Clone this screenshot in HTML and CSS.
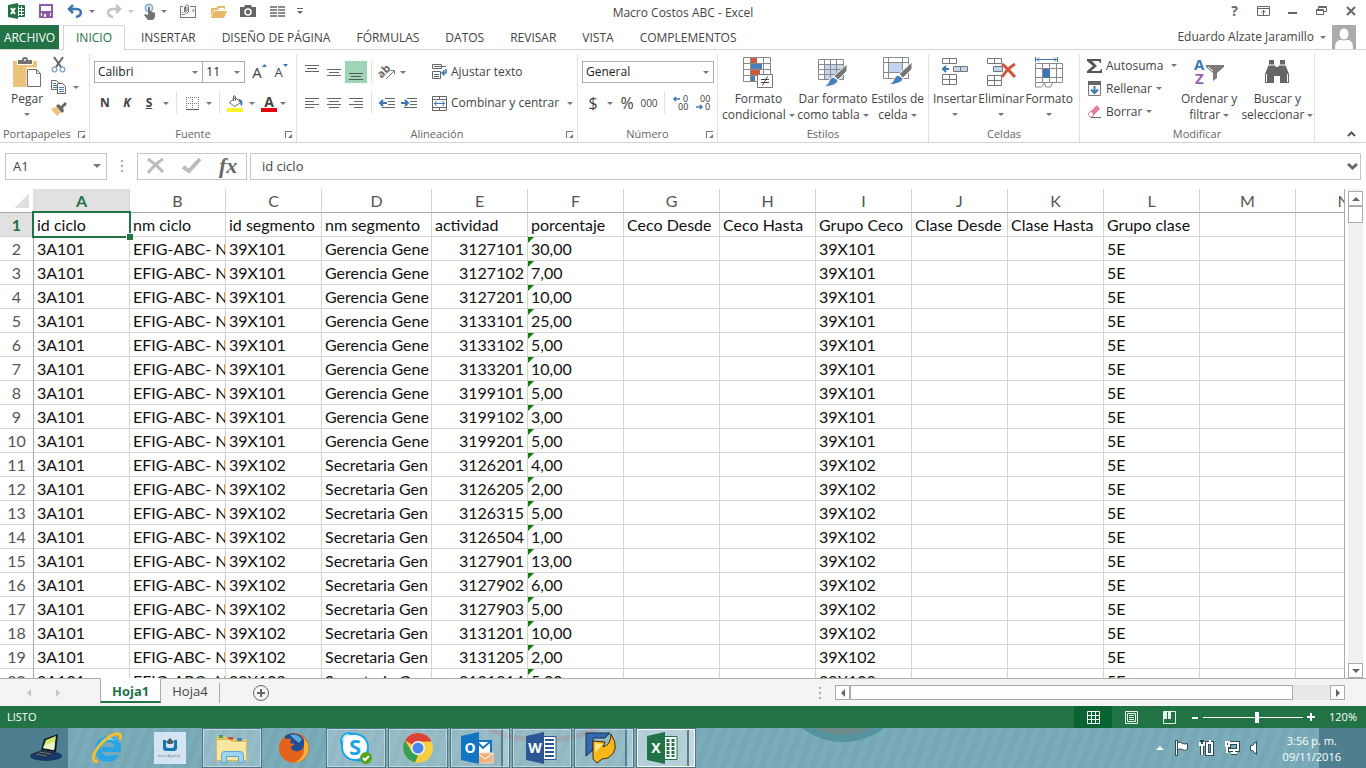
FILE: index.html
```html
<!DOCTYPE html>
<html lang="es">
<head>
  <meta charset="UTF-8" />
  <title>Macro Costos ABC - Excel</title>
  <meta name="viewport" content="width=device-width, initial-scale=1" />
  <link rel="stylesheet" href="styles.css">
</head>
<body>

  <!-- TITLE BAR -->
  <header class="titlebar">
    <div class="qat">
      <button class="qbtn" aria-label="Excel"><svg width="18" height="16" viewBox="0 0 18 16"><path fill="#fff" stroke="#217346" d="M9 2.500h7.500v11H9z"/><path stroke="#217346" stroke-width="2" stroke-dasharray="2 1" d="M12 3v10M15 3v10"/><path fill="#217346" d="M0 2l10-2v16L0 14z"/><path stroke="#fff" stroke-width="2" d="M3 5l4 6M7 5l-4 6"/></svg></button>
      <button class="qbtn" aria-label="Guardar"><svg width="14" height="14" viewBox="0 0 14 14"><path fill="none" stroke="#8e5ba6" stroke-width="2" d="M1 1h12v12H1z"/><path fill="#8e5ba6" d="M1 7h12v2H1zM3 9h8v5H3z"/><path fill="#fff" d="M5 10h2v3H5z"/></svg></button>
      <div class="pair">
        <button class="qbtn" aria-label="Deshacer"><svg width="16" height="14" viewBox="0 0 16 14"><path fill="none" stroke="#3d76b5" stroke-width="2.500" d="M6 1L2 5l4 4M2 5h7c7 0 6 7 0 8"/></svg></button>
        <button class="drop" aria-label="Más"></button>
      </div>
      <div class="pair">
        <button class="qbtn" aria-label="Rehacer"><svg width="16" height="14" viewBox="0 0 16 14"><path fill="none" stroke="#c3c3c3" stroke-width="2.500" d="M10 1l4 4-4 4M14 5H7C0 5 1 12 7 13"/></svg></button>
        <button class="drop pale" aria-label="Más"></button>
      </div>
      <div class="pair">
        <button class="qbtn slim" aria-label="Modo táctil"><svg width="14" height="17" viewBox="0 0 14 17"><circle cx="6" cy="5" r="3.500" fill="none" stroke="#8fb4d6" stroke-width="2"/><path fill="#737373" d="M5 4q1-1 2 0v4l5 2v4l-2 3H5l-4-5 1-1 3 1z"/></svg></button>
        <button class="drop" aria-label="Más"></button>
      </div>
      <button class="qbtn wide" aria-label="Correo"><svg width="16" height="14" viewBox="0 0 16 14"><path fill="none" stroke="#777" d="M3 2.500H.500v11h15v-11H10M12.500 5.500h1v2h-1M2 10.500h3M2 8.500h1"/><path fill="none" stroke="#777" d="M4.500 3v5q2 3 4 0V2q-1.500-3-3 0v5q1 1 1.500 0V3"/></svg></button>
      <button class="qbtn" aria-label="Abrir"><svg width="16" height="13" viewBox="0 0 16 13"><path fill="#e9b869" d="M0 3h5l2-2h7v3h-1V3H8L7 5H3L0 11zM3 6h13l-3 7H0z"/></svg></button>
      <button class="qbtn" aria-label="Cámara"><svg width="16" height="12" viewBox="0 0 16 12"><path fill="#666" d="M0 2h4l1-2h6l1 2h4v10H0z"/><circle cx="8" cy="7" r="3" fill="#666" stroke="#fff" stroke-width="1.500"/></svg></button>
      <button class="qbtn" aria-label="Paneles"><svg width="15" height="11" viewBox="0 0 15 11"><path fill="#8b8b8b" d="M0 0h7v2H0zM8 0h7v2H8zM0 3h7v2H0zM8 3h7v2H8zM0 6h7v2H0zM8 6h7v2H8zM0 9h7v2H0zM8 9h7v2H8z"/></svg></button>
      <button class="more" aria-label="Personalizar"></button>
    </div>
    <div class="doc-title">Macro Costos ABC - Excel</div>
    <div class="win-buttons">
      <button class="help" aria-label="Ayuda">?</button>
      <button aria-label="Opciones de cinta"><svg width="13" height="10" viewBox="0 0 13 10"><path fill="none" stroke="#666" d="M.500.500h12v9H.500zM1 2.500h11M6.500 9V4.500M4.500 6.500l2-2 2 2"/></svg></button>
      <button aria-label="Minimizar"><svg width="9" height="10" viewBox="0 0 9 10"><path fill="#666" d="M0 6h9v2H0z"/></svg></button>
      <button aria-label="Restaurar"><svg width="11" height="10" viewBox="0 0 11 10"><path fill="none" stroke="#666" d="M.500 3.500h7v5h-7zM.500 4.500h7M2.500 3V.500h8v5H8M3 1.500h7"/></svg></button>
      <button aria-label="Cerrar"><svg width="10" height="10" viewBox="0 0 10 10"><path stroke="#666" stroke-width="2" d="M1 1l8 8M9 1L1 9"/></svg></button>
    </div>
  </header>

  <!-- RIBBON TABS -->
  <nav class="tabs">
    <a href="#" class="tab file">ARCHIVO</a>
    <a href="#" class="tab active">INICIO</a>
    <a href="#" class="tab">INSERTAR</a>
    <a href="#" class="tab">DISEÑO DE PÁGINA</a>
    <a href="#" class="tab">FÓRMULAS</a>
    <a href="#" class="tab">DATOS</a>
    <a href="#" class="tab">REVISAR</a>
    <a href="#" class="tab">VISTA</a>
    <a href="#" class="tab">COMPLEMENTOS</a>
    <button class="account">Eduardo Alzate Jaramillo <span class="caret"></span>
      <svg width="24" height="24" viewBox="0 0 24 24"><path fill="#ababab" d="M0 0h24v24H0z"/><path fill="#fff" d="M3 24c0-7 2-9 6-9h6c4 0 6 2 6 9z"/><ellipse cx="12" cy="9" rx="5" ry="6" fill="#fff" stroke="#ababab"/></svg>
    </button>
  </nav>

  <!-- RIBBON -->
  <section class="ribbon">
    <div class="group clipboard">
      <div class="group-body">
        <button class="big">
          <svg width="30" height="31" viewBox="0 0 30 31"><path fill="#edc27a" d="M1 4h24v26H1z"/><path fill="#fff" d="M5 2h16v6H5z"/><path fill="#737373" d="M6 3h4q0-3 3-3t3 3h4v4H6z"/><circle cx="13" cy="3" r="1" fill="#fff"/><path fill="#fff" stroke="#fff" stroke-width="3" d="M16 12h9l4 4v14H16z"/><path fill="#fff" stroke="#737373" d="M15.500 12.500h9l4 4v13h-13zM24.500 12.500v4h4"/></svg>
          <span>Pegar</span><span class="caret"></span>
        </button>
        <div class="clip-tools">
          <button aria-label="Cortar"><svg width="15" height="16" viewBox="0 0 15 16"><path stroke="#666" stroke-width="2" d="M3 0l7 10M12 0L5 10"/><circle cx="3.500" cy="12.500" r="2.500" fill="none" stroke="#4a7ebb"/><circle cx="11.500" cy="12.500" r="2.500" fill="none" stroke="#4a7ebb"/></svg></button>
          <button aria-label="Copiar"><svg width="15" height="14" viewBox="0 0 15 14"><path fill="#fff" stroke="#666" d="M.500.500h5l2 2v7h-7z"/><path stroke="#4a7ebb" d="M2 3.500h3M2 5.500h4M2 7.500h4"/><path fill="#fff" stroke="#666" d="M6.500 3.500h5l3 3v7h-8z"/><path stroke="#4a7ebb" d="M8 7.500h5M8 9.500h5M8 11.500h5"/></svg><span class="caret"></span></button>
          <button aria-label="Copiar formato"><svg width="16" height="14" viewBox="0 0 16 14"><path fill="#edc27a" d="M0 7l5-2 5 5-4 4z"/><path fill="#666" d="M5 4l2-2 3 2 4-4 2 2-4 4 1 3-2 2z"/></svg></button>
        </div>
      </div>
      <div class="group-label">Portapapeles<i class="launcher"></i></div>
    </div>

    <div class="group font">
      <div class="group-body rows">
        <div class="row">
          <select class="font-name" aria-label="Fuente"><option>Calibri</option></select><select class="font-size" aria-label="Tamaño"><option>11</option></select>
          <button class="grow" aria-label="Aumentar">A<svg width="5" height="3" viewBox="0 0 5 3"><path fill="#3d76b5" d="M0 3L2.500 0 5 3z"/></svg></button>
          <button class="grow less" aria-label="Disminuir">A<svg width="5" height="3" viewBox="0 0 5 3"><path fill="#3d76b5" d="M0 0h5L2.500 3z"/></svg></button>
        </div>
        <div class="row">
          <button class="tool letter">N</button>
          <button class="tool letter italic">K</button>
          <button class="tool letter under">S</button>
          <button class="drop" aria-label="Subrayado"></button>
          <i class="sep"></i>
          <button class="tool" aria-label="Bordes"><svg width="13" height="13" viewBox="0 0 13 13"><path fill="none" stroke="#777" stroke-dasharray="1 1" d="M0 .500h13M0 6.500h13M.500 0v13M6.500 0v13M12.500 0v13"/><path stroke="#555" d="M0 12.500h13"/></svg></button>
          <button class="drop" aria-label="Más bordes"></button>
          <i class="sep"></i>
          <button class="tool" aria-label="Relleno"><svg width="17" height="17" viewBox="0 0 17 17"><path fill="#fff" stroke="#666" d="M2.500 7.500l6-5 5 5-6 4z"/><path fill="none" stroke="#666" d="M6.500 6V1q1.500-1 2 1v4"/><path fill="#3d76b5" d="M11 4q6 0 4 7-2-1-2-4z"/><path fill="#fff32b" d="M0 13h16v4H0z"/></svg></button>
          <button class="drop" aria-label="Más rellenos"></button>
          <button class="tool color-a" aria-label="Color de fuente">A</button>
          <button class="drop" aria-label="Más colores"></button>
        </div>
      </div>
      <div class="group-label">Fuente<i class="launcher"></i></div>
    </div>

    <div class="group align">
      <div class="group-body">
        <div class="rows">
          <div class="row">
            <button class="tool" aria-label="Superior"><svg width="14" height="15" viewBox="0 0 14 15"><path stroke="#666" d="M0 .500h14M2 3.500h10M0 6.500h14"/></svg></button>
            <button class="tool" aria-label="Medio"><svg width="14" height="15" viewBox="0 0 14 15"><path stroke="#666" d="M0 4.500h14M2 7.500h10M0 10.500h14"/></svg></button>
            <button class="tool on" aria-label="Inferior"><svg width="14" height="15" viewBox="0 0 14 15"><path stroke="#555" d="M0 8.500h14M2 11.500h10M0 14.500h14"/></svg></button>
            <i class="sep"></i>
            <button class="tool" aria-label="Orientación"><svg width="17" height="16" viewBox="0 0 17 16"><text x="-2" y="10" transform="rotate(-45 6 7)" class="icon-ab">ab</text><path fill="none" stroke="#777" d="M7 15l8-8M11.500 6.500h4v4"/></svg></button>
            <button class="drop" aria-label="Más orientación"></button>
          </div>
          <div class="row">
            <button class="tool" aria-label="Izquierda"><svg width="14" height="11" viewBox="0 0 14 11"><path stroke="#666" d="M0 .500h14M0 3.500h9M0 6.500h14M0 9.500h9"/></svg></button>
            <button class="tool" aria-label="Centrar"><svg width="14" height="11" viewBox="0 0 14 11"><path stroke="#666" d="M0 .500h14M2 3.500h10M0 6.500h14M2 9.500h10"/></svg></button>
            <button class="tool" aria-label="Derecha"><svg width="14" height="11" viewBox="0 0 14 11"><path stroke="#666" d="M0 .500h14M5 3.500h9M0 6.500h14M5 9.500h9"/></svg></button>
            <i class="sep"></i>
            <button class="tool" aria-label="Disminuir sangría"><svg width="16" height="11" viewBox="0 0 16 11"><path stroke="#666" d="M6 .500h10M9 3.500h7M9 6.500h7M3 9.500h13"/><path fill="none" stroke="#3d76b5" stroke-width="2" d="M4 2L1 5l3 3M1 5h7"/></svg></button>
            <button class="tool" aria-label="Aumentar sangría"><svg width="16" height="11" viewBox="0 0 16 11"><path stroke="#666" d="M6 .500h10M9 3.500h7M9 6.500h7M3 9.500h13"/><path fill="none" stroke="#3d76b5" stroke-width="2" d="M4 2l3 3-3 3M7 5H0"/></svg></button>
          </div>
        </div>
        <i class="sep tall"></i>
        <div class="rows wraps">
          <button class="labelled"><svg width="15" height="16" viewBox="0 0 15 16"><path fill="none" stroke="#666" d="M.500.500h9v4h-9zM2 2.500h12M.500 7.500h8v7h-8zM2 10.500h5M2 12.500h5"/><path fill="none" stroke="#3d76b5" stroke-width="1.500" d="M14 5v4h-4M12.500 6.500L10 9l2.500 2.500"/></svg>Ajustar texto</button>
          <button class="labelled"><svg width="15" height="15" viewBox="0 0 15 15"><path fill="none" stroke="#666" d="M.500.500h14v14H.500zM0 3.500h15M0 11.500h15M7.500 0v3M7.500 12v3"/><path fill="none" stroke="#3d76b5" d="M2 7.500h11M4.500 5l-2 2.500 2 2.500M10.500 5l2 2.500-2 2.500"/></svg>Combinar y centrar<span class="caret far"></span></button>
        </div>
      </div>
      <div class="group-label">Alineación<i class="launcher"></i></div>
    </div>

    <div class="group number">
      <div class="group-body rows">
        <select class="num-format" aria-label="Formato de número"><option>General</option></select>
        <div class="row">
          <button class="tool sign">$</button>
          <button class="drop" aria-label="Moneda"></button>
          <button class="tool sign">%</button>
          <button class="tool zeros">000</button>
          <i class="sep"></i>
          <button class="tool" aria-label="Aumentar decimales"><svg width="15" height="16" viewBox="0 0 15 16"><path fill="none" stroke="#3d76b5" stroke-width="1.500" d="M3 2L1 4l2 2M1 4h6"/><text x="10" y="7" class="icon-num">0</text><text x="5" y="15" class="icon-num">00</text></svg></button>
          <button class="tool" aria-label="Disminuir decimales"><svg width="15" height="16" viewBox="0 0 15 16"><text x="5" y="7" class="icon-num">00</text><text x="10" y="15" class="icon-num">0</text><path fill="none" stroke="#3d76b5" stroke-width="1.500" d="M5 10l2 2-2 2M7 12H1"/></svg></button>
        </div>
      </div>
      <div class="group-label">Número<i class="launcher"></i></div>
    </div>

    <div class="group styles">
      <div class="group-body">
        <button class="big">
          <svg width="30" height="31" viewBox="0 0 30 31"><path fill="#fff" stroke="#8a8a8a" d="M.500.500h27v24H.500zM0 6.500h28M0 12.500h28M0 18.500h28M7.500 0v25M20.500 0v25"/><path fill="#d2573c" d="M8 1h6v5H8zM8 13h9v5H8z"/><path fill="#4a7ebb" d="M8 7h11v5H8zM8 19h4v5H8z"/><path fill="#fff" stroke="#777" d="M14.500 17.500h15v13h-15z"/><path fill="none" stroke="#444" d="M18 22.500h8M18 25.500h8M24.500 19.500l-5 9"/></svg>
          <span>Formato<br>condicional <span class="caret"></span></span>
        </button>
        <button class="big">
          <svg width="30" height="31" viewBox="0 0 30 31"><path fill="#fff" d="M0 3h26v20H0z"/><path fill="#c3d5ea" d="M7 8h18v15H7z"/><path fill="none" stroke="#8a8a8a" d="M.500 2.500h25v20H.500zM0 7.500h26M0 12.500h26M0 17.500h26M6.500 2v21M12.500 2v21M18.500 2v21"/><path fill="#777" stroke="#fff" d="M16 19L29 7v7L20 23z"/><path fill="#4a7ebb" stroke="#fff" d="M15 20l5 3q0 6-15 7 6-3 6-6 1-3 4-4z"/></svg>
          <span>Dar formato<br>como tabla <span class="caret"></span></span>
        </button>
        <button class="big">
          <svg width="30" height="31" viewBox="0 0 30 31"><path fill="#fff" stroke="#8a8a8a" d="M.500.500h25v21H.500zM0 5.500h26M0 15.500h26M5.500 0v22M19.500 0v22"/><path fill="#c3d5ea" d="M6 6h13v9H6z"/><path fill="#777" stroke="#fff" d="M16 17L29 5v7L20 21z"/><path fill="#4a7ebb" stroke="#fff" d="M15 18l5 3q0 6-15 7 6-3 6-6 1-3 4-4z"/></svg>
          <span>Estilos de<br>celda <span class="caret"></span></span>
        </button>
      </div>
      <div class="group-label">Estilos</div>
    </div>

    <div class="group cells">
      <div class="group-body">
        <button class="big">
          <svg width="30" height="31" viewBox="0 0 30 31"><path fill="none" stroke="#777" d="M2.500 1.500h14v5h-14zM9.500 1v6M2.500 17.500h14v10h-14zM2 22.500h15M9.500 17v11"/><path fill="#c3d5ea" stroke="#777" d="M13.500 9.500h14v5h-14zM20.500 9v6"/><path fill="none" stroke="#3d76b5" stroke-width="2" d="M6 9l-3 3 3 3M3 12h6"/></svg>
          <span>Insertar</span><span class="caret"></span>
        </button>
        <button class="big">
          <svg width="30" height="31" viewBox="0 0 30 31"><path fill="none" stroke="#777" d="M1.500 1.500h14v5h-14zM8.500 1v6M1.500 18.500h14v10h-14zM1 23.500h15M8.500 18v11"/><path fill="#c3d5ea" stroke="#777" d="M7.500 9.500h9v5h-9z"/><path fill="none" stroke="#d2573c" stroke-width="3" d="M16 7q5 4 13 13M29 7q-8 5-13 13"/></svg>
          <span>Eliminar</span><span class="caret"></span>
        </button>
        <button class="big">
          <svg width="30" height="31" viewBox="0 0 30 31"><path fill="none" stroke="#3d76b5" d="M1.500 0v5M23.500 0v5M2 2.500h21M5 .500l-2 2 2 2M20 .500l2 2-2 2"/><path fill="#fff" stroke="#8a8a8a" d="M1.500 6.500h27v19h-27zM1 11.500h28M1 20.500h28M8.500 6v20M15.500 6v20M22.500 6v20M1.500 26v4h6l3-4 1 4h5l2-4"/><path fill="#3d76b5" d="M9 12h7v9H9z"/></svg>
          <span>Formato</span><span class="caret"></span>
        </button>
      </div>
      <div class="group-label">Celdas</div>
    </div>

    <div class="group edit">
      <div class="group-body">
        <div class="edit-list">
          <button class="labelled"><svg width="15" height="14" viewBox="0 0 15 14"><path fill="#555" d="M0 0h14v4h-1l-1-2H5l5 5-6 5h9l1-2h1v4H0v-2l6-5-6-5z"/></svg>Autosuma<span class="caret far"></span></button>
          <button class="labelled"><svg width="15" height="15" viewBox="0 0 15 15"><path fill="#fff" stroke="#777" d="M1.500.500h12v14h-12z"/><path fill="#666" d="M1 0h13v4H1z"/><path fill="none" stroke="#3d76b5" stroke-width="2" d="M7.500 5v7M4 8.500L7.500 12 11 8.500"/></svg>Rellenar<span class="caret"></span></button>
          <button class="labelled"><svg width="15" height="14" viewBox="0 0 15 14"><path fill="#e47e95" d="M4 6l6-6 3 4-6 6z"/><path fill="#fff" stroke="#e47e95" d="M1 9l3-3 3 4-2 2H3z"/><path stroke="#666" d="M4 12.500h10"/></svg>Borrar<span class="caret"></span></button>
        </div>
        <button class="big">
          <svg width="30" height="31" viewBox="0 0 30 31"><text x="0" y="13" class="icon-sort blue">A</text><text x="1" y="27" class="icon-sort violet">Z</text><path fill="#7a7a7a" d="M12 8h18v2l-7 6v5l-4 3v-8l-7-6z"/><path stroke="#fff" d="M14 10l5 4"/></svg>
          <span>Ordenar y<br>filtrar <span class="caret"></span></span>
        </button>
        <button class="big">
          <svg width="30" height="31" viewBox="0 0 30 31"><path fill="#666" d="M7 3h5v4l2 3h2l2-3V3h5v4l4 10v9h-9v-7h-6v7H3v-9L7 7z"/><path stroke="#fff" d="M6 8h7M17 8h7M4.500 17v8M25.500 17v8"/></svg>
          <span>Buscar y<br>seleccionar <span class="caret"></span></span>
        </button>
      </div>
      <div class="group-label">Modificar</div>
    </div>
    <button class="collapse" aria-label="Contraer"><svg width="9" height="6" viewBox="0 0 9 6"><path fill="none" stroke="#555" stroke-width="2" d="M1 5l3.500-3.500L8 5"/></svg></button>
  </section>

  <!-- FORMULA BAR -->
  <section class="formula-bar">
    <div class="name-box"><input type="text" value="A1" aria-label="Cuadro de nombres" /><span class="caret large"></span></div>
    <i class="dots"></i>
    <div class="fx-buttons">
      <button aria-label="Cancelar"><svg width="18" height="16" viewBox="0 0 18 16"><path fill="none" stroke="#bbb" stroke-width="3" d="M1 1q8 5 15 13M16 1Q8 6 1 15"/></svg></button>
      <button aria-label="Introducir"><svg width="20" height="16" viewBox="0 0 20 16"><path fill="none" stroke="#bbb" stroke-width="4" d="M1 9l6 4L18 1"/></svg></button>
      <button class="fx" aria-label="Insertar función">fx</button>
    </div>
    <div class="formula"><input type="text" value="id ciclo" aria-label="Barra de fórmulas" /><svg width="11" height="9" viewBox="0 0 11 9"><path fill="none" stroke="#666" stroke-width="3" d="M1 2l4.500 4L10 2"/></svg></div>
  </section>

  <!-- SHEET -->
  <main class="sheet">
    <div class="grid-clip">
      <table class="grid">
        <colgroup><col class="c-head"><col><col><col><col class="c-wide"><col><col><col><col><col><col><col><col><col><col></colgroup>
        <thead>
          <tr><th class="corner"></th><th class="sel">A</th><th>B</th><th>C</th><th>D</th><th>E</th><th>F</th><th>G</th><th>H</th><th>I</th><th>J</th><th>K</th><th>L</th><th>M</th><th>N</th></tr>
        </thead>
        <tbody id="rows">
          <tr><th class="sel">1</th><td class="current">id ciclo</td><td>nm ciclo</td><td>id segmento</td><td>nm segmento</td><td>actividad</td><td>porcentaje</td><td>Ceco Desde</td><td>Ceco Hasta</td><td>Grupo Ceco</td><td>Clase Desde</td><td>Clase Hasta</td><td>Grupo clase</td><td></td><td></td></tr>
        </tbody>
      </table>
    </div>
    <div class="vscroll">
      <button class="sbtn" aria-label="Arriba"><i class="arrow up"></i></button>
      <div class="vthumb"></div>
      <button class="sbtn bottom" aria-label="Abajo"><i class="arrow down"></i></button>
    </div>
  </main>

  <!-- SHEET TABS -->
  <section class="sheet-tabs">
    <div class="sheet-nav"><i class="arrow left pale"></i><i class="arrow right pale"></i></div>
    <a href="#" class="sheet-tab active">Hoja1</a>
    <a href="#" class="sheet-tab">Hoja4</a>
    <button class="add-sheet" aria-label="Hoja nueva"><svg width="16" height="16" viewBox="0 0 16 16"><circle cx="8" cy="8" r="7.500" fill="none" stroke="#666"/><path stroke="#666" stroke-width="2" d="M4 8h8M8 4v8"/></svg></button>
    <i class="dots"></i>
    <div class="hscroll">
      <button class="sbtn" aria-label="Izquierda"><i class="arrow left"></i></button>
      <div class="hthumb"></div>
      <button class="sbtn" aria-label="Derecha"><i class="arrow right"></i></button>
    </div>
  </section>

  <!-- STATUS BAR -->
  <footer class="status">
    <span class="ready">LISTO</span>
    <button class="view on" aria-label="Normal"><svg width="13" height="13" viewBox="0 0 13 13"><path fill="none" stroke="#fff" d="M.500.500h12v12H.500zM0 4.500h13M0 8.500h13M4.500 0v13M8.500 0v13"/></svg></button>
    <button class="view" aria-label="Diseño de página"><svg width="13" height="13" viewBox="0 0 13 13"><path fill="none" stroke="#e6f3eb" d="M.500.500h12v12H.500zM2.500 2.500h8v8h-8zM4 4.500h5M4 6.500h5M4 8.500h5"/></svg></button>
    <button class="view" aria-label="Salto de página"><svg width="13" height="13" viewBox="0 0 13 13"><path fill="none" stroke="#e6f3eb" d="M.500.500h12v12H.500z"/><path fill="#e6f3eb" d="M1 1h3v7H1zM5 1h3v7H5z"/></svg></button>
    <button class="zoom-btn" aria-label="Alejar"><svg width="7" height="7" viewBox="0 0 7 7"><path fill="#fff" d="M0 3h6v2H0z"/></svg></button>
    <input type="range" class="zoom" min="0" max="100" value="54" aria-label="Zoom" />
    <button class="zoom-btn" aria-label="Acercar"><svg width="8" height="8" viewBox="0 0 8 8"><path fill="#fff" d="M0 3h8v2H0zM3 0h2v8H3z"/></svg></button>
    <span class="percent">120%</span>
  </footer>

  <!-- TASKBAR -->
  <div class="taskbar">
    <svg class="wallpaper" width="500" height="40" viewBox="0 0 500 40"><ellipse cx="92" cy="-12" rx="62" ry="24" fill="none" stroke="#9c6f79" stroke-opacity=".4" stroke-width="5"/><circle cx="393" cy="-54" r="68" fill="#55949f"/><circle cx="393" cy="-54" r="61" fill="#6d8b8b"/></svg>
    <div class="apps">
      <button aria-label="Equipo"><svg width="32" height="32" viewBox="0 0 32 32"><ellipse cx="16" cy="24" rx="16" ry="5" fill="#17386b"/><path fill="#0f1d2c" d="M14 7L28 2l-2 18-15-2z"/><path fill="#d6e96b" d="M16 8l10-4-2 14-11-2z"/><path fill="#e8f6d0" d="M15 13l10-3-1 8-11-2z"/><path fill="#26303a" d="M3 22l8-4 14 2-7 5z"/><path stroke="#6d7a86" d="M6 22l11 2M9 20l12 2"/></svg></button>
      <button aria-label="Internet Explorer"><svg width="32" height="32" viewBox="0 0 32 32"><circle cx="16" cy="17" r="10" fill="none" stroke="#2aa5e3" stroke-width="6"/><path fill="#2aa5e3" d="M10 15h18v5H10z"/><path fill="#7aa7b6" d="M19 20h11v3H19z"/><path fill="#9bdcf7" d="M8 10q8-8 16-1-8-3-16 1z"/><path fill="none" stroke="#f3bf2c" stroke-width="3" d="M6 29C-3 31 2 18 12 9S31-1 28 8"/></svg></button>
      <button aria-label="Intel AppUp"><svg width="32" height="32" viewBox="0 0 32 32"><path fill="#d5e4f3" d="M0 0h32v32H0z"/><path fill="#1877b3" d="M9 8h3v6q0 2 2 2h4q2 0 2-2V8h3v8q0 3-3 3h-8q-3 0-3-3z"/><path fill="#47606a" d="M12 10l4-4 4 4-2 2h-4z"/><text x="4" y="25" class="icon-intel">Intel AppUp</text></svg></button>
      <button class="open" aria-label="Explorador"><svg width="34" height="30" viewBox="0 0 34 30"><path fill="#e9c764" d="M2 3h8l2 3h20v21H2z"/><path fill="#3aa655" d="M4 2h4v3H4z"/><path fill="#d9532c" d="M13 4h5v3h-5z"/><path fill="#3a84c9" d="M22 5h5v3h-5z"/><path fill="#f9e7a1" stroke="#dcb856" d="M1.500 6.500h13l2 2h15v19h-30z"/><path fill="#9ed3ef" stroke="#5aa6d3" d="M6.500 29.500v-8q0-3 3-3h15q4 0 4 3v8h-5v-6h-12v6z"/></svg></button>
      <button aria-label="Firefox"><svg width="32" height="32" viewBox="0 0 32 32"><circle cx="16" cy="16" r="15" fill="#e4621b"/><path fill="#f9b233" d="M26 6q8 9 2 18-4 6-12 7 11-6 10-14z"/><path fill="#1e4f91" d="M7 4q9-6 17 1 4 5 1 11-3 4-8 3-4-1-4-4l4-3-5-1 1-4q-3-1-6 0z"/><path fill="#5aa7dc" d="M12 3q7-2 12 4l-3 4-5-4z"/></svg></button>
      <button class="open" aria-label="Skype"><svg width="32" height="32" viewBox="0 0 32 32"><g fill="#fff" stroke="#1ca6e6" stroke-width="2"><circle cx="9" cy="9" r="8"/><circle cx="20" cy="21" r="8"/><circle cx="15" cy="15" r="13"/></g><circle cx="10" cy="10" r="7" fill="#fff"/><text x="15" y="23" class="logo skype">S</text><circle cx="26" cy="26" r="6" fill="#55a51c"/><path fill="none" stroke="#fff" stroke-width="2" d="M23 26l2 2 4-4"/></svg></button>
      <button class="open" aria-label="Chrome"><svg width="32" height="32" viewBox="0 0 32 32"><circle cx="16" cy="16" r="15" fill="#f8cf3f"/><path fill="#d94437" d="M16 16L3 8.500A15 15 0 0 1 29.500 9.500H16z"/><path fill="#35a055" d="M3 8.500L10 20l6 3.500-3 7A15 15 0 0 1 3 8.500z"/><circle cx="16" cy="16" r="7" fill="#f6f6f6"/><circle cx="16" cy="16" r="5.500" fill="#4b86ee"/></svg></button>
      <button class="open stack" aria-label="Outlook"><svg width="32" height="32" viewBox="0 0 32 32"><path fill="#fff" stroke="#1175c4" stroke-width="2" d="M16 9h14v13H16z"/><path fill="none" stroke="#1175c4" stroke-width="2" d="M17 11l5 5 8-7"/><path fill="#f0b27c" stroke="#f8d7b6" d="M16 21h16v10H16z"/><path fill="none" stroke="#fff" d="M16 21l8 6 8-6"/><path fill="#1175c4" d="M0 4l18-4v32L0 28z"/><text x="9" y="21" class="logo">O</text></svg></button>
      <button class="open" aria-label="Word"><svg width="32" height="32" viewBox="0 0 32 32"><path fill="#fff" stroke="#2b5797" d="M17 4.500h13v23H17z"/><path stroke="#2b5797" stroke-width="2" d="M19 8h9M19 12h9M19 16h9M19 20h9M19 24h9"/><path fill="#2b5797" d="M0 4l18-4v32L0 28z"/><text x="9" y="21" class="logo">W</text></svg></button>
      <button class="open stack" aria-label="SAP"><svg width="32" height="32" viewBox="0 0 32 32"><path fill="#346bad" stroke="#16304f" d="M1 1h24l-5 5H8v12l-7 6z"/><path fill="#f7b718" stroke="#3f2b05" d="M8 9l12 1-2 5q8-2 8-13 10 16-3 24l-6 1-5 4-4-4z"/><path fill="#fde487" d="M10 11l8 1-8 9z"/></svg></button>
      <button class="open stack current" aria-label="Excel"><svg width="32" height="32" viewBox="0 0 32 32"><path fill="#fff" stroke="#217346" d="M17 4.500h13v23H17z"/><path stroke="#217346" stroke-width="3" stroke-dasharray="3 1" d="M21 7v18M26 7v18"/><path fill="#217346" d="M0 4l18-4v32L0 28z"/><text x="9" y="21" class="logo">X</text></svg></button>
    </div>
    <div class="tray">
      <i class="arrow up light"></i>
      <svg width="15" height="16" viewBox="0 0 15 16"><path fill="#fff" stroke="#2b4b57" d="M1.500.500h2v15h-2zM3.500 2.500q3-1 5 1 2 1 5 0v6q-3 2-5 0-2-1-5 0z"/></svg>
      <svg width="15" height="16" viewBox="0 0 15 16"><path fill="none" stroke="#2b4b57" stroke-width="4" d="M8 3h5v11H8zM3 0v15"/><path fill="none" stroke="#fff" stroke-width="2" d="M8 3h5v11H8zM10 1h2M1 2v3h4V2M3 5v10"/></svg>
      <svg width="15" height="16" viewBox="0 0 15 16"><path fill="none" stroke="#2b4b57" stroke-width="4" d="M5 3h9v7H5zM7 13h6"/><path fill="none" stroke="#fff" stroke-width="2" d="M5 3h9v7H5M7 13h6M10 10v3M2 2h3v4H2zM3 6v7"/></svg>
      <svg width="13" height="16" viewBox="0 0 13 16"><path fill="#fff" stroke="#2b4b57" d="M1.500 5.500h2l4-4v13l-4-4h-2z"/></svg>
    </div>
    <div class="clock">3:56 p. m.<br>09/11/2016</div>
  </div>

  <script>
    // segment, segment name, activity, percentage
    const data = [
      ["39X101", "Gerencia Gene", 3127101, "30,00"],
      ["39X101", "Gerencia Gene", 3127102, "7,00"],
      ["39X101", "Gerencia Gene", 3127201, "10,00"],
      ["39X101", "Gerencia Gene", 3133101, "25,00"],
      ["39X101", "Gerencia Gene", 3133102, "5,00"],
      ["39X101", "Gerencia Gene", 3133201, "10,00"],
      ["39X101", "Gerencia Gene", 3199101, "5,00"],
      ["39X101", "Gerencia Gene", 3199102, "3,00"],
      ["39X101", "Gerencia Gene", 3199201, "5,00"],
      ["39X102", "Secretaria Gen", 3126201, "4,00"],
      ["39X102", "Secretaria Gen", 3126205, "2,00"],
      ["39X102", "Secretaria Gen", 3126315, "5,00"],
      ["39X102", "Secretaria Gen", 3126504, "1,00"],
      ["39X102", "Secretaria Gen", 3127901, "13,00"],
      ["39X102", "Secretaria Gen", 3127902, "6,00"],
      ["39X102", "Secretaria Gen", 3127903, "5,00"],
      ["39X102", "Secretaria Gen", 3131201, "10,00"],
      ["39X102", "Secretaria Gen", 3131205, "2,00"],
      ["39X102", "Secretaria Gen", 3131214, "5,00"]
    ];

    document.getElementById("rows").innerHTML += data.map(([seg, name, act, pct], i) => `
      <tr><th>${i + 2}</th><td>3A101</td><td>EFIG-ABC- N</td><td>${seg}</td><td>${name}</td>
      <td class="num">${act}</td><td class="flag">${pct}</td><td></td><td></td><td>${seg}</td>
      <td></td><td></td><td>5E</td><td></td><td></td></tr>`).join("");
  </script>

</body>
</html>
```
FILE: styles.css
```css
* {
  box-sizing: border-box;
}

body {
  margin: 0;
  height: 100vh;
  display: flex;
  flex-direction: column;
  overflow: hidden;
  background: #fff;
  color: #444;
  font-family: "Open Sans", "Noto Sans", sans-serif;
  font-size: 12px;
  line-height: 16px;
}

button {
  border: 0;
  padding: 0;
  background: none;
  color: inherit;
  font: inherit;
  white-space: nowrap;
}

input, select {
  font: inherit;
  color: inherit;
}

a {
  color: inherit;
  text-decoration: none;
}

svg {
  display: block;
  flex: none;
  overflow: visible;
}

.caret, .drop::after {
  content: "";
  display: inline-block;
  border: 3px solid transparent;
  border-top-color: #777;
  border-bottom: 0;
  vertical-align: middle;
}

.caret.large {
  border-width: 4px 4px 0;
}

.drop {
  width: 10px;
  height: 22px;
  display: flex;
  align-items: center;
  justify-content: center;
}

.drop.pale::after {
  border-top-color: #c3c3c3;
}

/* title bar */
.titlebar {
  height: 25px;
  flex: none;
  display: grid;
  grid-template-columns: 1fr auto 1fr;
  align-items: center;
}

.qat {
  display: flex;
  align-items: center;
  gap: 5px;
  padding: 0 0 3px 5px;
}

.pair {
  display: flex;
}

.qbtn {
  width: 24px;
  height: 22px;
  display: flex;
  align-items: center;
  justify-content: center;
}

.qbtn.slim {
  width: 18px;
}

.qbtn.wide {
  width: 28px;
}

.more {
  width: 12px;
  display: flex;
  flex-direction: column;
  align-items: center;
  gap: 2px;
}

.more::before {
  content: "";
  width: 6px;
  height: 1px;
  background: #666;
}

.more::after {
  content: "";
  border: 3px solid transparent;
  border-top-color: #666;
  border-bottom: 0;
}

.win-buttons {
  display: flex;
  justify-content: flex-end;
  align-items: center;
  padding: 0 1px 3px 0;
}

.win-buttons button {
  width: 29px;
  display: flex;
  justify-content: center;
}

.win-buttons .help {
  font-size: 14px;
  font-weight: bold;
  color: #666;
}

/* tabs */
.tabs {
  height: 25px;
  flex: none;
  display: flex;
  border-bottom: 1px solid #d4d4d4;
}

.tab {
  padding: 5px 13px;
  white-space: nowrap;
}

.tab.file {
  width: 59px;
  padding: 5px 0;
  margin-right: 4px;
  background: #217346;
  color: #fff;
  text-align: center;
}

.tab.active {
  height: 25px;
  padding: 4px 12px;
  margin-right: 3px;
  border: 1px solid #d4d4d4;
  border-bottom: 0;
  background: #fff;
  color: #217346;
}

.account {
  margin-left: auto;
  margin-right: 10px;
  display: flex;
  align-items: center;
  gap: 6px;
}

/* ribbon */
.ribbon {
  height: 93px;
  flex: none;
  display: flex;
  padding: 4px 0 0;
  border-bottom: 1px solid #d4d4d4;
}

.group {
  flex: none;
  display: flex;
  flex-direction: column;
  border-right: 1px solid #e1e1e1;
}

.group.clipboard { width: 90px; }
.group.font { width: 207px; }
.group.align { width: 281px; }
.group.number { width: 140px; }
.group.styles { width: 211px; }
.group.cells { width: 151px; }
.group.edit { width: 235px; }

.group-body {
  flex: 1;
  display: flex;
  padding: 3px 4px 0;
}

.group-label {
  display: flex;
  justify-content: center;
  position: relative;
  color: #666;
  font-size: 11px;
}

.clipboard .group-label {
  justify-content: flex-start;
  padding-left: 3px;
}

.launcher {
  position: absolute;
  right: 4px;
  top: 5px;
  width: 7px;
  height: 7px;
  border-top: 1px solid #777;
  border-left: 1px solid #777;
}

.launcher::after {
  content: "";
  position: absolute;
  right: 0;
  bottom: 0;
  border: 2px solid #777;
  border-top-color: transparent;
  border-left-color: transparent;
}

.rows {
  display: flex;
  flex-direction: column;
  gap: 9px;
  padding-top: 4px;
}

.group .rows > * {
  height: 22px;
}

.row {
  display: flex;
  align-items: center;
}

.sep {
  width: 1px;
  height: 22px;
  margin: 0 4px;
  background: #e1e1e1;
}

.group-body > .sep.tall {
  height: 55px;
  margin: 3px 8px 0 4px;
}

.tool {
  width: 22px;
  height: 22px;
  display: flex;
  align-items: center;
  justify-content: center;
}

.tool.on {
  background: #9fd5b7;
}

.big {
  display: flex;
  flex-direction: column;
  align-items: center;
}

.big svg {
  margin-bottom: 3px;
}

.big > .caret {
  margin-top: 6px;
}

.clipboard .group-body {
  gap: 8px;
  padding-top: 0;
  padding-left: 11px;
}

.clipboard .big, .edit .big {
  margin-top: 3px;
}

.clipboard .big {
  width: 32px;
}

.clip-tools button {
  height: 22px;
  display: flex;
  align-items: center;
  gap: 7px;
}

select {
  appearance: none;
  height: 22px;
  padding: 0 3px;
  border: 1px solid #ababab;
  border-radius: 0;
  background: #fff url("data:image/svg+xml,%3Csvg xmlns='http://www.w3.org/2000/svg' width='6' height='3'%3E%3Cpath fill='%23777' d='M0 0h6L3 3z'/%3E%3C/svg%3E") no-repeat right 4px center;
  color: #222;
}

.font-name { width: 111px; }
.font-size { width: 43px; margin-left: -1px; }
.num-format { width: 132px; }

.group-body.rows {
  padding: 7px 4px 0;
}

.grow {
  width: 22px;
  display: flex;
  justify-content: center;
  align-items: flex-start;
  font-size: 15px;
  margin-left: 4px;
}

.grow.less {
  margin-left: 0;
  font-size: 13px;
}

.letter {
  font-weight: bold;
}

.italic {
  font-style: italic;
}

.under {
  text-decoration: underline;
}

.font .drop {
  width: 12px;
}

.color-a {
  height: 17px;
  font-weight: bold;
  font-size: 14px;
  line-height: 13px;
  width: 16px;
  margin-left: 3px;
  border-bottom: 4px solid #e3000f;
}

.labelled {
  display: flex;
  align-items: center;
  gap: 4px;
}

.caret.far {
  margin-left: 4px;
}

.sign {
  font-size: 16px;
}

.zeros {
  font-size: 10px;
}

.number .drop {
  width: 12px;
}

.icon-ab {
  font: bold 11px "Open Sans", sans-serif;
  fill: #666;
}

.icon-num {
  font: 9px "Open Sans", sans-serif;
  fill: #333;
}

.icon-sort {
  font: bold 15px "Open Sans", sans-serif;
}

.icon-sort.blue { fill: #3d76b5; }
.icon-sort.violet { fill: #9b5fb5; }

.styles .group-body {
  justify-content: space-between;
}

.cells .group-body {
  justify-content: space-between;
  padding-right: 6px;
}

.edit .group-body {
  padding-top: 0;
  padding-left: 7px;
  gap: 4px;
}

.edit-list {
  width: 90px;
}

.edit-list .labelled {
  height: 23px;
}

.collapse {
  margin: auto 10px 5px auto;
}

/* formula bar */
.formula-bar {
  height: 46px;
  flex: none;
  display: flex;
  align-items: center;
  padding: 0 5px;
}

.name-box, .fx-buttons, .formula {
  height: 27px;
  display: flex;
  align-items: center;
  border: 1px solid #c6c6c6;
}

.name-box {
  width: 102px;
  padding: 0 5px 0 7px;
}

.name-box input, .formula input {
  flex: 1;
  min-width: 0;
  border: 0;
  padding: 0;
  font-size: 13px;
}

.dots {
  width: 2px;
  height: 12px;
  margin: 0 14px;
  background: repeating-linear-gradient(#aaa 0 2px, transparent 2px 5px);
}

.fx-buttons {
  width: 110px;
  justify-content: space-around;
}

.fx {
  font: italic bold 22px "Liberation Serif", serif;
  color: #666;
}

.formula {
  flex: 1;
  margin-left: 3px;
  padding: 0 2px 0 11px;
}

/* sheet */
.sheet {
  flex: 1;
  min-height: 0;
  display: flex;
}

.grid-clip {
  flex: 1;
  overflow: hidden;
  border-right: 1px solid #ababab;
}

.grid {
  table-layout: fixed;
  width: 1392px;
  border-spacing: 0;
  font-family: Lato, sans-serif;
  font-size: 16px;
  color: #111;
}

.grid col { width: 96px; }
.grid .c-head { width: 34px; }
.grid .c-wide { width: 110px; }

.grid th, .grid td {
  height: 24px;
  padding: 0;
  border-right: 1px solid #d4d4d4;
  border-bottom: 1px solid #d4d4d4;
  white-space: nowrap;
  overflow: hidden;
}

.grid td {
  position: relative;
  padding: 1px 3px 0;
  line-height: 22px;
}

.grid th {
  font-weight: normal;
  color: #555;
}

.grid thead th {
  border-bottom-color: #ababab;
}

.grid tbody th, .grid .corner {
  border-right-color: #ababab;
}

.grid .corner {
  background: linear-gradient(135deg, transparent 50%, #dfdfdf 50%) no-repeat 14px 4px / 15px 15px;
  border-right-color: #e1e1e1;
}

.grid .sel {
  background: #e1e1e1;
  color: #217346;
  font-weight: bold;
}

.grid .num {
  text-align: right;
}

.grid .flag::before {
  content: "";
  position: absolute;
  left: 0;
  top: 0;
  border: 3px solid #107c10;
  border-right-color: transparent;
  border-bottom-color: transparent;
}

.grid .current {
  overflow: visible;
}

.grid .current::before {
  content: "";
  position: absolute;
  inset: -2px -2px -2px -2px;
  border: 2px solid #217346;
}

.grid .current::after {
  content: "";
  position: absolute;
  z-index: 1;
  right: -4px;
  bottom: -4px;
  width: 6px;
  height: 6px;
  background: #217346;
  border: 1px solid #fff;
  border-width: 1px 0 0 1px;
}

.vscroll {
  width: 21px;
  display: flex;
  flex-direction: column;
  align-items: center;
  padding: 2px 0 0;
  background: linear-gradient(#f1f1f1, #f1f1f1) no-repeat 3px 0 / 15px 100%;
}

.sbtn {
  width: 15px;
  height: 15px;
  flex: none;
  display: flex;
  align-items: center;
  justify-content: center;
  border: 1px solid #ababab;
  background: #fff;
}

.sbtn.bottom {
  margin-top: auto;
}

.vthumb {
  width: 15px;
  height: 17px;
  border: 1px solid #ababab;
  background: #fff;
}

.arrow {
  border: 4px solid transparent;
}

.arrow.up { border-bottom-color: #666; border-top: 0; }
.arrow.down { border-top-color: #666; border-bottom: 0; }
.arrow.left { border-right-color: #666; border-left: 0; }
.arrow.right { border-left-color: #666; border-right: 0; }
.arrow.left.pale { border-right-color: #c6c6c6; }
.arrow.right.pale { border-left-color: #c6c6c6; }
.arrow.up.light { border-bottom-color: #fff; }

/* sheet tabs */
.sheet-tabs {
  height: 28px;
  flex: none;
  display: flex;
  align-items: center;
  background: #f4f4f4;
  border-top: 1px solid #ababab;
  font-size: 13px;
}

.sheet-nav {
  width: 100px;
  display: flex;
  justify-content: center;
  gap: 25px;
  padding-right: 13px;
}

.sheet-tab {
  align-self: flex-start;
  height: 25px;
  padding: 4px 11px;
}

.sheet-tab:not(.active) {
  height: 20px;
  margin-top: 4px;
  padding: 0 11px;
  border-right: 1px solid #ababab;
}

.sheet-tab.active {
  margin-top: -1px;
  background: #fff;
  border: 1px solid #ababab;
  border-top-color: #fff;
  border-bottom: 2px solid #217346;
  color: #217346;
  font-weight: bold;
}

.add-sheet {
  margin-left: 33px;
}

.sheet-tabs .dots {
  margin-left: auto;
}

.hscroll {
  width: 510px;
  margin-right: 21px;
  display: flex;
  background: #e8e8e8;
}

.hthumb {
  width: 443px;
  height: 15px;
  margin-right: auto;
  border: 1px solid #ababab;
  background: #fff;
}

/* status bar */
.status {
  height: 22px;
  flex: none;
  display: flex;
  align-items: center;
  padding: 0 9px 0 7px;
  background: #217346;
  color: #fff;
  font-size: 11px;
}

.ready {
  margin-right: auto;
}

.view {
  width: 38px;
  height: 22px;
  display: flex;
  align-items: center;
  justify-content: center;
}

.view.on {
  background: #0a6332;
}

.zoom-btn {
  margin: 0 4px;
}

.zoom {
  appearance: none;
  width: 100px;
  height: 12px;
  margin: 0;
  background: linear-gradient(#fff, #fff) no-repeat center / 100% 1px;
}

.zoom::-webkit-slider-thumb {
  appearance: none;
  width: 4px;
  height: 11px;
  background: #fff;
}

.percent {
  margin-left: 10px;
}

/* taskbar */
.taskbar {
  height: 40px;
  flex: none;
  display: flex;
  position: relative;
  background: linear-gradient(90deg, #4f7f8f 68px, transparent 68px calc(100% - 47px), #4f7f8f calc(100% - 47px)),
    repeating-linear-gradient(110deg, #7bacb9 0 6px, #77a7b5 6px 12px);
}

.wallpaper {
  position: absolute;
  left: 450px;
  top: 0;
  overflow: hidden;
}

.apps {
  position: relative;
  display: flex;
  gap: 2px;
  padding-left: 16px;
}

.apps button {
  width: 60px;
  height: 40px;
  display: flex;
  align-items: center;
  justify-content: center;
  border: 1px solid transparent;
}

.apps .open {
  border-color: #4c7887;
  background: rgba(255, 255, 255, .2);
  box-shadow: inset 0 0 0 1px rgba(255, 255, 255, .4);
}

.apps .stack {
  padding-right: 6px;
  background: linear-gradient(90deg, transparent calc(100% - 8px), #587f8d calc(100% - 8px) calc(100% - 6px), rgba(255, 255, 255, .2) calc(100% - 6px)), rgba(255, 255, 255, .2);
}

.apps .current {
  background-color: rgba(255, 255, 255, .45);
  box-shadow: inset 0 0 0 1px #fff;
}

.logo {
  font: bold 14px "Open Sans", sans-serif;
  fill: #fff;
  text-anchor: middle;
}

.logo.skype {
  font-size: 22px;
  fill: #1ca6e6;
}

.icon-intel {
  font: 4px "Open Sans", sans-serif;
  fill: #777;
}

.tray {
  margin-left: auto;
  display: flex;
  align-items: center;
  gap: 10px;
  position: relative;
}

.clock {
  position: relative;
  padding: 5px 25px 0 21px;
  text-align: center;
  color: #fff;
  font-size: 11px;
}
```
